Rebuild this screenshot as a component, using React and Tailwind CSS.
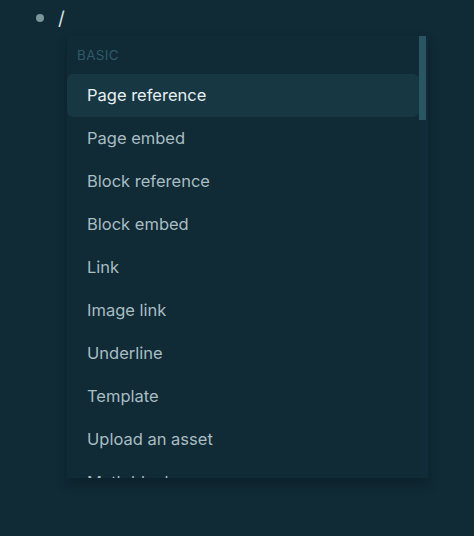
const items = [
  "Page reference",
  "Page embed",
  "Block reference",
  "Block embed",
  "Link",
  "Image link",
  "Underline",
  "Template",
  "Upload an asset",
  "Math block",
];

export default function App() {
  return (
    <div
      className="w-[474px] h-[536px] bg-[#102a36] overflow-hidden"
      style={{ fontFamily: "Inter, 'Noto Sans', sans-serif" }}
    >
      <div className="flex items-center h-[36px] pl-[36px]">
        <span className="w-[8px] h-[8px] rounded-full bg-[#7d959c]" />
        <span className="ml-[14px] text-[19px] text-[#d6e2e5] leading-none">/</span>
      </div>
      <div className="relative ml-[67px] w-[361px] h-[442px] overflow-hidden shadow-[0_6px_10px_rgba(6,24,32,0.45)] bg-[#102a36]">
        <div className="w-[352px]">
          <div className="h-[38px] flex items-center px-[10px] text-[13.5px] uppercase text-[#2f5b69] tracking-[0.3px]">
            Basic
          </div>
          {items.map((item, i) => (
            <div
              key={item}
              className={
                i === 0
                  ? "h-[43px] flex items-center px-[20px] rounded-[6px] bg-[#173743] text-[16.5px] text-[#e8f0f2]"
                  : "h-[43px] flex items-center px-[20px] text-[16.5px] text-[#a9bdc3]"
              }
            >
              {item}
            </div>
          ))}
        </div>
        <div className="absolute top-0 right-0 w-[9px] h-full bg-[#112c38]" />
        <div className="absolute top-[-1px] right-[2px] w-[7px] h-[85px] bg-[#2a5563]" />
      </div>
    </div>
  );
}
